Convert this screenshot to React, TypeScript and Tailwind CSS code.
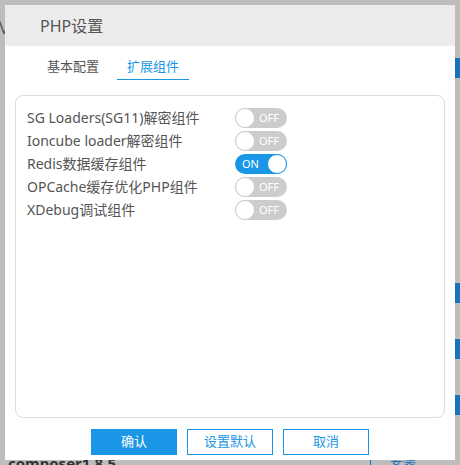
import React, { useState } from 'react';

const font = { fontFamily: '"Noto Sans", "Noto Sans CJK SC", sans-serif' };

type Ext = { name: string; on: boolean };

const initial: Ext[] = [
  { name: 'SG Loaders(SG11)解密组件', on: false },
  { name: 'Ioncube loader解密组件', on: false },
  { name: 'Redis数据缓存组件', on: true },
  { name: 'OPCache缓存优化PHP组件', on: false },
  { name: 'XDebug调试组件', on: false },
];

const Toggle: React.FC<{ on: boolean; onClick: () => void }> = ({ on, onClick }) => (
  <button
    onClick={onClick}
    className={`relative flex h-[20px] w-[52px] items-center rounded-full text-[11px] leading-none text-white ${
      on ? 'bg-[#1a96e6] justify-start pl-[7px]' : 'bg-[#cccccc] justify-end pr-[8px]'
    }`}
  >
    <span>{on ? 'ON' : 'OFF'}</span>
    <span
      className={`absolute top-0 h-[20px] w-[20px] rounded-full border bg-white ${
        on ? 'right-0 border-[#1a96e6]' : 'left-0 border-[#cccccc]'
      }`}
    />
  </button>
);

export default function App() {
  const [exts, setExts] = useState(initial);
  const [tab, setTab] = useState(1);

  return (
    <div className="relative h-[465px] w-[460px] overflow-hidden bg-[#bdbdbd]" style={font}>
      {/* page behind the overlay */}
      <div className="absolute left-[-4px] top-[14px] text-[18px] text-[#555]">M</div>
      <div className="absolute left-[8px] top-[452px] text-[15px] font-bold text-[#333]">composer1.8.5</div>
      <div className="absolute left-[370px] top-[452px] h-[20px] w-px bg-[#1a73b8]" />
      <div className="absolute left-[390px] top-[452px] text-[13px] text-[#1a73b8]">安装</div>
      <div className="absolute left-[455px] top-[58px] h-[20px] w-[5px] bg-[#1a73b8]" />
      <div className="absolute left-[455px] top-[283px] h-[20px] w-[5px] bg-[#1a73b8]" />
      <div className="absolute left-[455px] top-[339px] h-[20px] w-[5px] bg-[#1a73b8]" />
      <div className="absolute left-[455px] top-[395px] h-[20px] w-[5px] bg-[#1a73b8]" />

      {/* dialog */}
      <div className="absolute left-[5px] top-[5px] flex h-[455px] w-[450px] flex-col bg-white">
        <div className="flex h-[41px] items-center bg-[#ececec] pl-[35px] text-[16px] text-[#555]">
          PHP设置
        </div>

        <div className="flex h-[34px] items-end pl-[32px] text-[13px]">
          {['基本配置', '扩展组件'].map((t, i) => (
            <button
              key={t}
              onClick={() => setTab(i)}
              className={`mr-[8px] w-[72px] border-b pb-[3px] ${
                tab === i ? 'border-[#1a96e6] text-[#1a96e6]' : 'border-transparent text-[#555]'
              }`}
            >
              {t}
            </button>
          ))}
        </div>

        <div className="mx-[10px] mt-[15px] h-[323px] rounded-[8px] border border-[#dddddd] px-[11px] pt-[10px]">
          {tab === 1 &&
            exts.map((e, i) => (
              <div key={e.name} className="flex h-[23px] items-center">
                <span className="w-[208px] text-[14px] text-[#555]">{e.name}</span>
                <Toggle
                  on={e.on}
                  onClick={() =>
                    setExts((prev) => prev.map((x, j) => (j === i ? { ...x, on: !x.on } : x)))
                  }
                />
              </div>
            ))}
        </div>

        <div className="mt-[11px] flex justify-center gap-[10px] text-[13px]">
          <button className="h-[26px] w-[86px] bg-[#1a96e6] text-white">确认</button>
          <button className="h-[26px] w-[86px] border border-[#1a96e6] text-[#1a96e6]">设置默认</button>
          <button className="h-[26px] w-[86px] border border-[#1a96e6] text-[#1a96e6]">取消</button>
        </div>
      </div>
    </div>
  );
}
